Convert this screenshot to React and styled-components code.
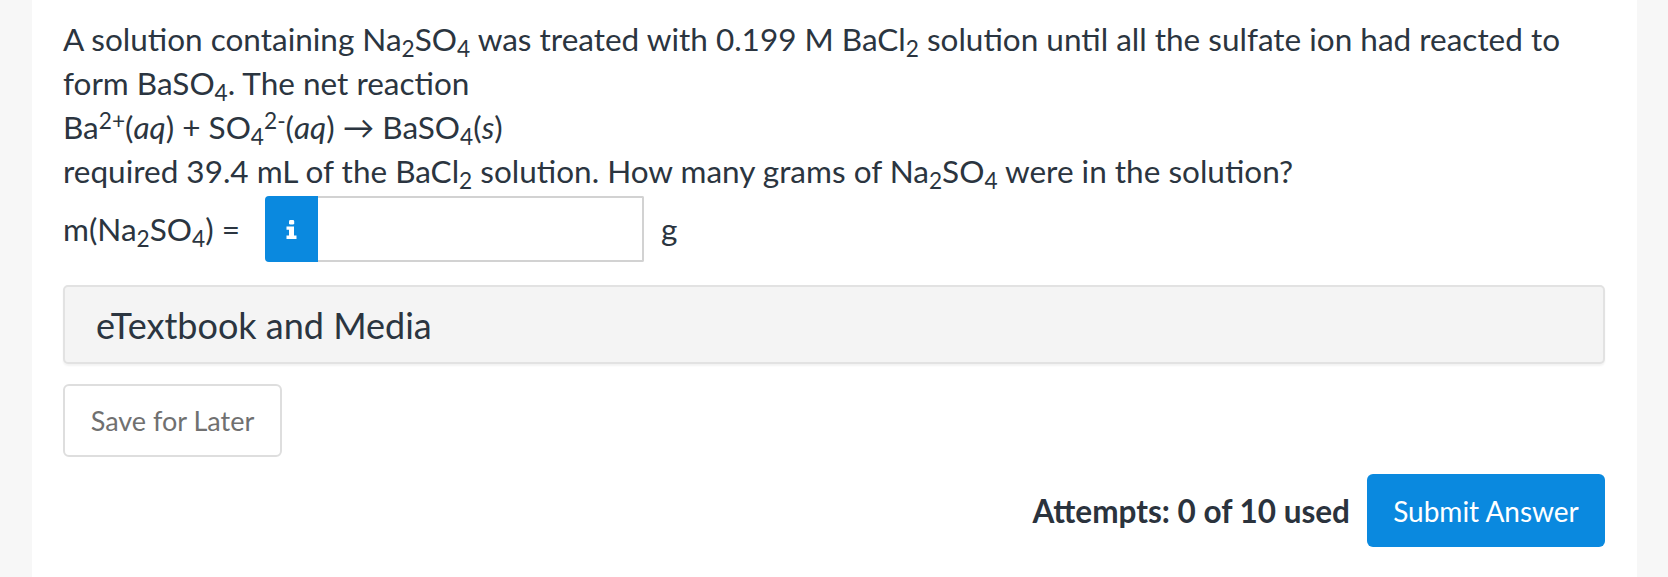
import React from 'react';
import styled, { createGlobalStyle } from 'styled-components';

const GlobalStyle = createGlobalStyle`
  html, body {
    margin: 0;
    padding: 0;
    background: #f7f7f7;
  }
  body {
    font-family: Lato, "Open Sans", "Liberation Sans", sans-serif;
    color: #2b3540;
  }
`;

const Page = styled.div`
  display: flex;
  padding: 0 31px 0 32px;
  min-height: 577px;
  box-sizing: border-box;
`;

const Panel = styled.main`
  flex: 1;
  background: #fff;
  padding: 17px 32px 0 31px;
  box-sizing: border-box;
`;

const Question = styled.p`
  margin: 0;
  font-size: 31.5px;
  line-height: 44px;
`;

const Sub = styled.sub`
  font-size: 0.72em;
  line-height: 0;
  vertical-align: -0.25em;
`;

const Sup = styled.sup`
  font-size: 0.72em;
  line-height: 0;
  vertical-align: 0.45em;
`;

const Em = styled.i`
  font-style: italic;
`;

const AnswerRow = styled.div`
  display: flex;
  align-items: center;
  margin-top: 3px;
  height: 66px;
`;

const Label = styled.span`
  font-size: 31.5px;
  margin-right: 25px;
`;

const InfoButton = styled.button`
  display: flex;
  align-items: center;
  justify-content: center;
  width: 53px;
  height: 66px;
  border: none;
  border-radius: 4px 0 0 4px;
  background: #0a89df;
  padding: 0;
`;

const Input = styled.input`
  width: 326px;
  height: 66px;
  box-sizing: border-box;
  border: 2px solid #d2d2d2;
  border-left: none;
  border-radius: 0 2px 2px 0;
  outline: none;
  font-family: Lato, sans-serif;
  font-size: 28px;
  padding: 0 12px;
`;

const Unit = styled.span`
  font-size: 31.5px;
  margin-left: 17px;
`;

const MediaBox = styled.div`
  margin-top: 23px;
  height: 79px;
  box-sizing: border-box;
  display: flex;
  align-items: center;
  padding: 0 31px;
  background: #f4f4f4;
  border: 2px solid #e2e2e2;
  border-radius: 5px;
  box-shadow: 0 2px 2px rgba(0, 0, 0, 0.05);
  font-size: 36px;
`;

const SaveButton = styled.button`
  display: block;
  margin-top: 20px;
  width: 219px;
  height: 73px;
  background: #fff;
  border: 2px solid #dedede;
  border-radius: 6px;
  color: #707070;
  font-family: Lato, "Liberation Sans", sans-serif;
  font-size: 27px;
  padding: 0;
`;

const Footer = styled.div`
  display: flex;
  justify-content: flex-end;
  align-items: center;
  gap: 17px;
  margin-top: 17px;
`;

const Attempts = styled.span`
  font-size: 31.5px;
  font-weight: bold;
  color: #2b333d;
`;

const SubmitButton = styled.button`
  width: 238px;
  height: 73px;
  background: #0a89df;
  border: none;
  border-radius: 6px;
  color: #fff;
  font-family: Lato, "Liberation Sans", sans-serif;
  font-size: 28px;
  padding: 0;
`;

const InfoIcon = () => (
  <svg width="11" height="19" viewBox="0 0 11 19" fill="#fff">
    <rect x="3" y="0" width="5.2" height="4.6" rx="1.4" />
    <path d="M0.5 6.6 H8 V15.6 H10.5 V19 H0.5 V15.6 H3 V9.8 H0.5 Z" />
  </svg>
);

export default function App() {
  return (
    <>
      <GlobalStyle />
      <Page>
        <Panel>
          <Question>
            A solution containing Na<Sub>2</Sub>SO<Sub>4</Sub> was treated with 0.199 M BaCl<Sub>2</Sub> solution until all the sulfate ion had reacted to form BaSO<Sub>4</Sub>. The net reaction
            <br />
            Ba<Sup>2+</Sup>(<Em>aq</Em>) + SO<Sub>4</Sub><Sup>2-</Sup>(<Em>aq</Em>) → BaSO<Sub>4</Sub>(<Em>s</Em>)
            <br />
            required 39.4 mL of the BaCl<Sub>2</Sub> solution. How many grams of Na<Sub>2</Sub>SO<Sub>4</Sub> were in the solution?
          </Question>
          <AnswerRow>
            <Label>m(Na<Sub>2</Sub>SO<Sub>4</Sub>) =</Label>
            <InfoButton type="button" aria-label="info">
              <InfoIcon />
            </InfoButton>
            <Input type="text" />
            <Unit>g</Unit>
          </AnswerRow>
          <MediaBox>eTextbook and Media</MediaBox>
          <SaveButton type="button">Save for Later</SaveButton>
          <Footer>
            <Attempts>Attempts: 0 of 10 used</Attempts>
            <SubmitButton type="button">Submit Answer</SubmitButton>
          </Footer>
        </Panel>
      </Page>
    </>
  );
}
